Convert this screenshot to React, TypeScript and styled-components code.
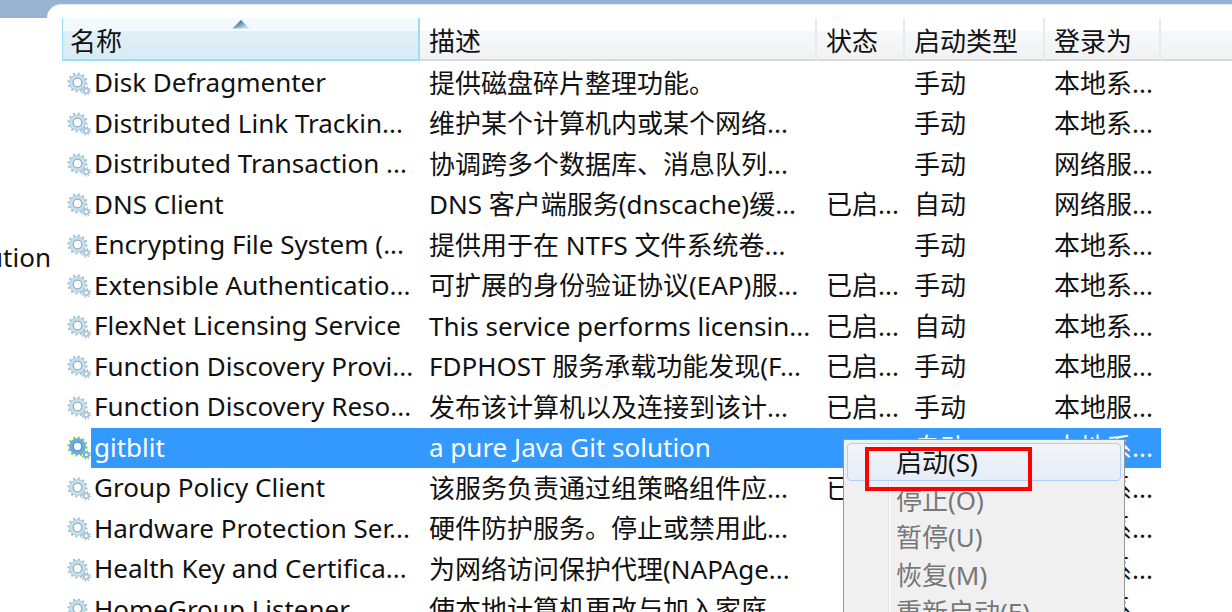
import React from "react";
import styled, { createGlobalStyle, css } from "styled-components";

const GlobalStyle = createGlobalStyle`
  * { box-sizing: border-box; }
  body {
    margin: 0;
    background: #fff;
    color: #111;
    font-family: "Noto Sans", "Noto Sans CJK SC", sans-serif;
    font-size: 26px;
    line-height: 38px;
  }
`;

const Window = styled.div`
  position: relative;
  height: 100vh;
  overflow: hidden;
  background: #fff;
`;

const TopBand = styled.div`
  height: 18px;
  padding: 4px 0 0 47px;
  background: #99b2d1;
`;

const TabCorner = styled.div`
  height: 14px;
  border-top: 1px solid #e3eaf4;
  border-top-left-radius: 14px;
  background: #fff;
`;

const Body = styled.div`
  display: flex;
`;

const SidePane = styled.aside`
  display: flex;
  flex: 0 0 62px;
  justify-content: flex-end;
  min-width: 0;
  width: 62px;
  padding: 220px 11px 0 0;
  white-space: nowrap;
`;

const ServiceTable = styled.table`
  flex: 1;
  width: 0;
  table-layout: fixed;
  border-collapse: collapse;
  white-space: nowrap;
`;

const HeadCell = styled.th`
  height: 45px;
  padding: 0;
  font-weight: 400;
  text-align: left;
  vertical-align: top;
`;

const HeadLabel = styled.div<{ $sorted?: boolean }>`
  position: relative;
  height: 43px;
  padding: 4px 0 0 9px;
  border-right: 2px solid #e9eaec;
  border-bottom: 2px solid #d8d9db;
  background: linear-gradient(#fff 0 32%, #f7f8fa 32%, #f1f2f4);
  ${(p) =>
    p.$sorted &&
    css`
      border: solid #9bdcf8;
      border-width: 0 2px 2px 1px;
      padding-left: 7px;
      background: linear-gradient(#f3fafd 0 32%, #e1f0f8 32%, #d8ebf5);
    `}
  &:empty { border-right: 0; }
`;

const SortArrow = styled.svg`
  position: absolute;
  top: 1px;
  left: calc(50% - 9px);
`;

const Row = styled.tr<{ $selected?: boolean }>`
  height: 40px;
  &:nth-child(odd) { height: 41px; }
  color: ${(p) => (p.$selected ? "#fff" : "#111")};
`;

const Cell = styled.td<{ $selected?: boolean }>`
  height: inherit;
  padding: 0 0 2px 9px;
  overflow: hidden;
  background: ${(p) => (p.$selected ? "#3399ff" : "transparent")};
`;

const NameCell = styled.td`
  height: inherit;
  padding: 0 0 0 5px;
  overflow: hidden;
`;

const NameLine = styled.div`
  display: flex;
  height: 100%;
  align-items: center;
`;

const NameText = styled.span<{ $selected?: boolean }>`
  flex: 1;
  height: 100%;
  padding-left: 3px;
  background: ${(p) => (p.$selected ? "#3399ff" : "transparent")};
`;

const Menu = styled.div`
  position: absolute;
  top: 439px;
  left: 843px;
  width: 282px;
  padding: 3px;
  border: 1px solid #979797;
  background: linear-gradient(90deg, #f0f0f0 44px, #e0e0e0 44px 45px, #fff 45px 46px, #f0f0f0 46px);
`;

const MenuItem = styled.button`
  display: block;
  width: 100%;
  height: 37px;
  padding: 0 0 0 48px;
  border: 1px solid transparent;
  border-radius: 4px;
  background: transparent;
  color: #111;
  font: inherit;
  line-height: 36px;
  text-align: left;
  &:nth-child(odd) { height: 38px; }
  &:disabled { color: #777; }
  &:enabled {
    border-color: #aecff7;
    background: linear-gradient(#f2f4f8, #e5edf7);
  }
`;

const Highlight = styled.div`
  position: absolute;
  top: 447px;
  left: 865px;
  width: 167px;
  height: 44px;
  border: 4px solid #f00;
  pointer-events: none;
`;

function GearIcon({ active }: { active?: boolean }) {
  const teeth = active ? "#8fd02f" : "#a3bfd3";
  const body = active ? "#6caeea" : "#c3e2f1";
  const edge = active ? "#4a90cc" : "#98acba";
  return (
    <svg width="24" height="24" viewBox="0 0 24 24" fill="none" aria-hidden="true">
      <circle cx="10.5" cy="10.5" r="9" stroke={teeth} strokeWidth="2.2" strokeDasharray="2 2.712" />
      <circle cx="10.5" cy="10.5" r="6.3" stroke={body} strokeWidth="3.6" />
      <circle cx="10.5" cy="10.5" r="7.9" stroke={edge} strokeWidth="0.5" />
      <circle cx="10.5" cy="10.5" r="4.3" fill="#fff" stroke={edge} strokeWidth="1.3" />
      <circle cx="19.2" cy="18.8" r="3.9" stroke={teeth} strokeWidth="1.7" strokeDasharray="1.4 1.663" />
      <circle cx="19.2" cy="18.8" r="2.4" fill="#fff" stroke={active ? body : "#a9c6d8"} strokeWidth="1.8" />
    </svg>
  );
}

const columns = [
  { label: "名称", width: 358 },
  { label: "描述", width: 397 },
  { label: "状态", width: 88 },
  { label: "启动类型", width: 140 },
  { label: "登录为", width: 116 },
];

const services = [
  ["Disk Defragmenter", "提供磁盘碎片整理功能。", "", "手动", "本地系..."],
  ["Distributed Link Trackin...", "维护某个计算机内或某个网络...", "", "手动", "本地系..."],
  ["Distributed Transaction ...", "协调跨多个数据库、消息队列...", "", "手动", "网络服..."],
  ["DNS Client", "DNS 客户端服务(dnscache)缓...", "已启...", "自动", "网络服..."],
  ["Encrypting File System (...", "提供用于在 NTFS 文件系统卷...", "", "手动", "本地系..."],
  ["Extensible Authenticatio...", "可扩展的身份验证协议(EAP)服...", "已启...", "手动", "本地系..."],
  ["FlexNet Licensing Service", "This service performs licensin...", "已启...", "自动", "本地系..."],
  ["Function Discovery Provi...", "FDPHOST 服务承载功能发现(F...", "已启...", "手动", "本地服..."],
  ["Function Discovery Reso...", "发布该计算机以及连接到该计...", "已启...", "手动", "本地服..."],
  ["gitblit", "a pure Java Git solution", "", "自动", "本地系..."],
  ["Group Policy Client", "该服务负责通过组策略组件应...", "已启...", "", "本地系..."],
  ["Hardware Protection Ser...", "硬件防护服务。停止或禁用此...", "", "", "本地系..."],
  ["Health Key and Certifica...", "为网络访问保护代理(NAPAge...", "", "", "本地系..."],
  ["HomeGroup Listener", "使本地计算机更改与加入家庭...", "", "", "本地系..."],
];

const actions = ["启动(S)", "停止(O)", "暂停(U)", "恢复(M)", "重新启动(E)"];

export default function App() {
  return (
    <Window>
      <GlobalStyle />
      <TopBand>
        <TabCorner />
      </TopBand>
      <Body>
        <SidePane>ution</SidePane>
        <ServiceTable>
          <colgroup>
            {columns.map((c) => (
              <col key={c.label} width={c.width} />
            ))}
            <col />
          </colgroup>
          <thead>
            <tr>
              {columns.map((c, i) => (
                <HeadCell key={c.label} scope="col">
                  <HeadLabel $sorted={i === 0}>
                    {c.label}
                    {i === 0 && (
                      <SortArrow width="18" height="10" viewBox="0 0 18 10" aria-hidden="true">
                        <defs>
                          <linearGradient id="arrow" x1="0" y1="0" x2="1" y2="1">
                            <stop offset="0.2" stopColor="#35617c" />
                            <stop offset="0.8" stopColor="#b5e0f2" />
                          </linearGradient>
                        </defs>
                        <path d="M9 1 17.5 9.5H.5z" fill="url(#arrow)" />
                      </SortArrow>
                    )}
                  </HeadLabel>
                </HeadCell>
              ))}
              <HeadCell as="td">
                <HeadLabel />
              </HeadCell>
            </tr>
          </thead>
          <tbody>
            {services.map(([name, ...details]) => {
              const selected = name === "gitblit";
              return (
                <Row key={name} $selected={selected}>
                  <NameCell>
                    <NameLine>
                      <GearIcon active={selected} />
                      <NameText $selected={selected}>{name}</NameText>
                    </NameLine>
                  </NameCell>
                  {details.map((text, i) => (
                    <Cell key={i} $selected={selected}>
                      {text}
                    </Cell>
                  ))}
                  <td />
                </Row>
              );
            })}
          </tbody>
        </ServiceTable>
      </Body>
      <Menu role="menu">
        {actions.map((label, i) => (
          <MenuItem key={label} role="menuitem" disabled={i > 0}>
            {label}
          </MenuItem>
        ))}
      </Menu>
      <Highlight />
    </Window>
  );
}
